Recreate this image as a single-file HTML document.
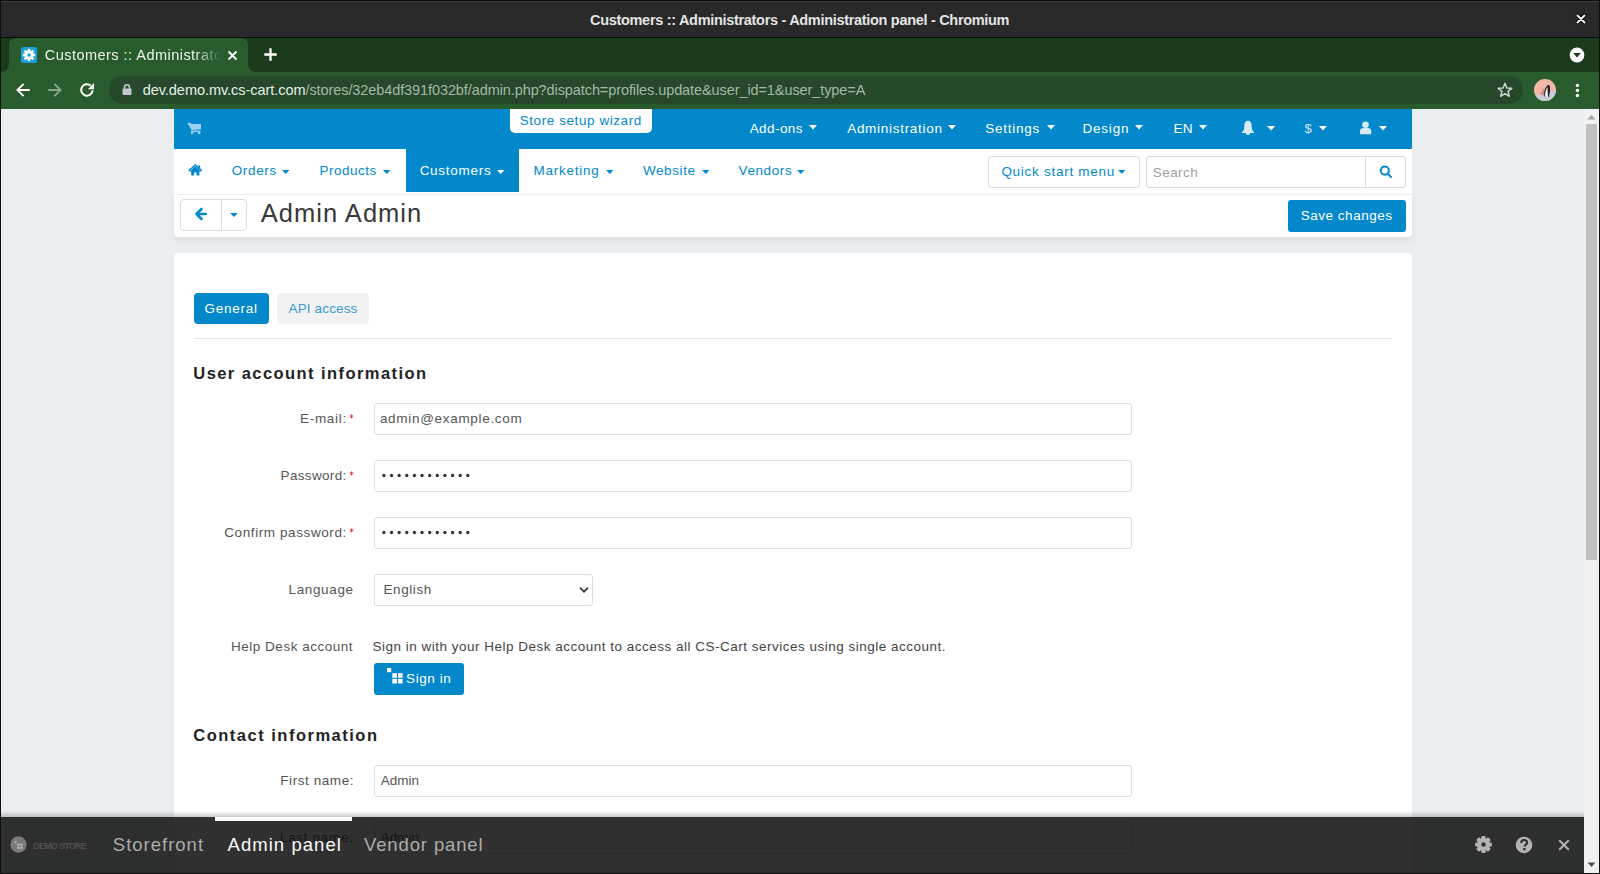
<!DOCTYPE html><html><head><meta charset="utf-8"><style>
html,body{margin:0;padding:0;width:1600px;height:874px;overflow:hidden;background:#ebeef1;}
.b{position:absolute;box-sizing:border-box;}
.t{position:absolute;white-space:nowrap;font-family:"Liberation Sans",sans-serif;}
svg.b{overflow:visible;}
</style></head><body>
<div class="b" style="left:0px;top:0px;width:1600px;height:38px;background:#292929;"></div>
<div class="b" style="left:0px;top:0px;width:1600px;height:1px;background:#0d0d0d;"></div>
<div class="b" style="left:1px;top:1px;width:1598px;height:1px;background:#3b3b3b;"></div>
<div class="b" style="left:0px;top:37px;width:1600px;height:1px;background:#0a0a0a;"></div>
<div class="t" style="left:590.00px;top:13px;font-size:14.5px;line-height:14.5px;color:#e4e4e4;font-weight:700;letter-spacing:-0.308px;">Customers :: Administrators - Administration panel - Chromium</div>
<svg class="b" style="left:1576px;top:14px;" width="10" height="10" viewBox="0 0 10 10"><path d="M1.5 1.5 L8.5 8.5 M8.5 1.5 L1.5 8.5" stroke="#000" stroke-width="3.6" stroke-linecap="round"/><path d="M1.5 1.5 L8.5 8.5 M8.5 1.5 L1.5 8.5" stroke="#f2f2f2" stroke-width="2" stroke-linecap="round"/></svg>
<div class="b" style="left:0px;top:38px;width:1600px;height:34px;background:#1b3a1b;"></div>
<svg class="b" style="left:0px;top:37px;" width="260" height="35" viewBox="0 0 260 35"><path d="M0 35 Q9 35 9 26 L9 8 Q9 1 17 1 L240 1 Q248 1 248 8 L248 26 Q248 35 257 35 Z" fill="#295c2c"/></svg>
<div class="b" style="left:1px;top:38px;width:9px;height:34px;background:transparent;"></div>
<svg class="b" style="left:21px;top:47px;" width="16" height="16" viewBox="0 0 16 16"><rect x="0" y="0" width="16" height="16" rx="2.5" fill="#1aa0e0"/><g transform="translate(8,8)" fill="#fff"><circle r="4.6"/><rect x="-1.3" y="-6.2" width="2.6" height="3" transform="rotate(0)"/><rect x="-1.3" y="-6.2" width="2.6" height="3" transform="rotate(45)"/><rect x="-1.3" y="-6.2" width="2.6" height="3" transform="rotate(90)"/><rect x="-1.3" y="-6.2" width="2.6" height="3" transform="rotate(135)"/><rect x="-1.3" y="-6.2" width="2.6" height="3" transform="rotate(180)"/><rect x="-1.3" y="-6.2" width="2.6" height="3" transform="rotate(225)"/><rect x="-1.3" y="-6.2" width="2.6" height="3" transform="rotate(270)"/><rect x="-1.3" y="-6.2" width="2.6" height="3" transform="rotate(315)"/><circle r="1.8" fill="#1aa0e0"/></g></svg>
<div class="t" style="left:44.75px;top:48px;font-size:14.5px;line-height:14.5px;color:#eef3ee;letter-spacing:0.469px;-webkit-mask-image:linear-gradient(90deg,#000 150px,transparent 176px);">Customers :: Administrato</div>
<svg class="b" style="left:227px;top:50px;" width="11" height="11" viewBox="0 0 11 11"><path d="M1.5 1.5 L9.5 9.5 M9.5 1.5 L1.5 9.5" stroke="#fff" stroke-width="1.8"/></svg>
<svg class="b" style="left:264px;top:48px;" width="13" height="13" viewBox="0 0 13 13"><path d="M6.5 0.3 V12.7 M0.3 6.5 H12.7" stroke="#fff" stroke-width="2.3"/></svg>
<svg class="b" style="left:1569px;top:47px;" width="16" height="16" viewBox="0 0 16 16"><circle cx="8" cy="8" r="7.4" fill="#fff"/><polygon points="4.2,6 11.8,6 8,10.6" fill="#1c3a1c"/></svg>
<div class="b" style="left:0px;top:72px;width:1600px;height:37px;background:#295c2c;"></div>
<div class="b" style="left:109px;top:76px;width:1414px;height:28px;background:#25482a;border-radius:14px;"></div>
<svg class="b" style="left:16px;top:83px;" width="14" height="14" viewBox="0 0 14 14"><path d="M13.8 7 H1.5 M7.6 0.9 L1.4 7 L7.6 13.1" stroke="#fff" stroke-width="1.9" fill="none"/></svg>
<svg class="b" style="left:48px;top:83px;" width="14" height="14" viewBox="0 0 14 14"><path d="M0.2 7 H12.5 M6.4 0.9 L12.6 7 L6.4 13.1" stroke="#8aa88b" stroke-width="1.9" fill="none"/></svg>
<svg class="b" style="left:80px;top:83px;" width="14" height="14" viewBox="0 0 14 14"><path d="M12.6 7.2 A5.7 5.7 0 1 1 10.6 2.6" stroke="#fff" stroke-width="2" fill="none"/><polygon points="14,0 14,6.2 7.8,6.2" fill="#fff"/></svg>
<svg class="b" style="left:122px;top:84px;" width="10" height="11" viewBox="0 0 10 11"><rect x="0.5" y="4.5" width="9" height="6.5" rx="1" fill="#c3c6cc"/><path d="M2.5 5 V3.3 A2.5 2.5 0 0 1 7.5 3.3 V5" stroke="#c3c6cc" stroke-width="1.6" fill="none"/></svg>
<div class="t" style="left:142.70px;top:83px;font-size:14.5px;line-height:14.5px;color:#e8ede8;letter-spacing:-0.045px;">dev.demo.mv.cs-cart.com</div>
<div class="t" style="left:305.50px;top:83px;font-size:14.5px;line-height:14.5px;color:#a4b8a4;letter-spacing:-0.091px;">/stores/32eb4df391f032bf/admin.php?dispatch=profiles.update&amp;user_id=1&amp;user_type=A</div>
<svg class="b" style="left:1497px;top:82px;" width="16" height="16" viewBox="0 0 16 16"><polygon points="8,1.3 9.9,6 14.8,6.3 11,9.4 12.3,14.3 8,11.6 3.7,14.3 5,9.4 1.2,6.3 6.1,6" stroke="#cfd3cf" stroke-width="1.5" fill="none" stroke-linejoin="round"/></svg>
<svg class="b" style="left:1534px;top:79px;" width="22" height="22" viewBox="0 0 22 22"><defs><clipPath id="av"><circle cx="11" cy="11" r="11"/></clipPath></defs><g clip-path="url(#av)"><rect width="22" height="22" fill="#f3b7a7"/><polygon points="0,17 22,11 22,22 0,22" fill="#c9ccd6"/><polygon points="6,15 10,9 11,17" fill="#c98f80"/><path d="M11 18 C9 14 11 8 14 6 C16 5 16 9 16 12 L15 18 Z" fill="#1f2123"/><path d="M11.5 18 C10.5 14 12 10 13.5 8 L14 18 Z" fill="#f4f4f4"/></g></svg>
<svg class="b" style="left:1575px;top:83px;" width="5" height="15" viewBox="0 0 5 15"><circle cx="2.4" cy="2.4" r="1.7" fill="#fff"/><circle cx="2.4" cy="7.4" r="1.7" fill="#fff"/><circle cx="2.4" cy="12.5" r="1.7" fill="#fff"/></svg>
<div class="b" style="left:1px;top:109px;width:1583px;height:764px;background:#ebeef1;"></div>
<div class="b" style="left:1584px;top:109px;width:15px;height:764px;background:#f1f1f1;"></div>
<svg class="b" style="left:1587px;top:114px;" width="9" height="6" viewBox="0 0 9 6"><polygon points="0.5,5.5 8.5,5.5 4.5,1" fill="#a3a3a3"/></svg>
<div class="b" style="left:1586px;top:124px;width:11px;height:436px;background:#c1c1c1;"></div>
<svg class="b" style="left:1587px;top:862px;" width="9" height="6" viewBox="0 0 9 6"><polygon points="0.5,0.5 8.5,0.5 4.5,5" fill="#505050"/></svg>
<div class="b" style="left:174px;top:109px;width:1238px;height:40px;background:#0388cc;"></div>
<svg class="b" style="left:187px;top:122px;" width="15" height="13" viewBox="0 0 15 13"><path d="M0.5 1.2 H3.6 L4.3 2.2 H14 V7.3 L4.8 8.4 V9.2 H13 V10.2" fill="none"/><path d="M0.3 0.8 H3.5 L4.2 2 H14 V7.2 L4.6 8.2 Z" fill="#9dcfee"/><rect x="4" y="8.6" width="9.3" height="1.5" fill="#9dcfee"/><rect x="4" y="9.5" width="2.2" height="2.6" fill="#9dcfee"/><rect x="11" y="9.5" width="2.2" height="2.6" fill="#9dcfee"/></svg>
<div class="b" style="left:510px;top:109px;width:142px;height:24px;background:#fff;border-radius:0 0 5px 5px;"></div>
<div class="t" style="left:519.65px;top:114px;font-size:13.5px;line-height:13.5px;color:#0388cc;letter-spacing:0.579px;">Store setup wizard</div>
<div class="t" style="left:749.70px;top:122px;font-size:13.5px;line-height:13.5px;color:#fff;letter-spacing:0.425px;">Add-ons</div>
<svg class="b" style="left:809px;top:125px;" width="8" height="4.5" viewBox="0 0 8 4.5"><polygon points="0,0 8,0 4.0,4.5" fill="#fff"/></svg>
<div class="t" style="left:847.20px;top:122px;font-size:13.5px;line-height:13.5px;color:#fff;letter-spacing:0.712px;">Administration</div>
<svg class="b" style="left:947.6px;top:125px;" width="8" height="4.5" viewBox="0 0 8 4.5"><polygon points="0,0 8,0 4.0,4.5" fill="#fff"/></svg>
<div class="t" style="left:985.25px;top:122px;font-size:13.5px;line-height:13.5px;color:#fff;letter-spacing:0.757px;">Settings</div>
<svg class="b" style="left:1046.7px;top:125px;" width="8" height="4.5" viewBox="0 0 8 4.5"><polygon points="0,0 8,0 4.0,4.5" fill="#fff"/></svg>
<div class="t" style="left:1082.40px;top:122px;font-size:13.5px;line-height:13.5px;color:#fff;letter-spacing:0.810px;">Design</div>
<svg class="b" style="left:1135px;top:125px;" width="8" height="4.5" viewBox="0 0 8 4.5"><polygon points="0,0 8,0 4.0,4.5" fill="#fff"/></svg>
<div class="t" style="left:1173.60px;top:122px;font-size:13.5px;line-height:13.5px;color:#fff;letter-spacing:0.050px;">EN</div>
<svg class="b" style="left:1198.7px;top:125px;" width="8" height="4.5" viewBox="0 0 8 4.5"><polygon points="0,0 8,0 4.0,4.5" fill="#fff"/></svg>
<svg class="b" style="left:1240px;top:120px;" width="16" height="16" viewBox="0 0 16 16"><path d="M8 0.8 C5.6 0.8 4.6 2.5 4.4 5 L4.1 8.5 C3.8 10.5 2.6 11.8 1.5 13 L14.5 13 C13.4 11.8 12.2 10.5 11.9 8.5 L11.6 5 C11.4 2.5 10.4 0.8 8 0.8 Z" fill="#d6eaf7"/><path d="M6 12.8 H10 V13.8 C10 14.6 9 14.9 8 14.9 C7 14.9 6 14.6 6 13.8 Z" fill="#d6eaf7"/></svg>
<svg class="b" style="left:1266.5px;top:125.6px;" width="8.2" height="4.4" viewBox="0 0 8.2 4.4"><polygon points="0,0 8.2,0 4.1,4.4" fill="#fff"/></svg>
<div class="t" style="left:1304.55px;top:122px;font-size:13px;line-height:13px;color:#d6eaf7;">$</div>
<svg class="b" style="left:1318.7px;top:125.6px;" width="8" height="4.4" viewBox="0 0 8 4.4"><polygon points="0,0 8,0 4.0,4.4" fill="#fff"/></svg>
<svg class="b" style="left:1359px;top:121px;" width="14" height="14" viewBox="0 0 14 14"><circle cx="6.5" cy="3.7" r="3.3" fill="#d6eaf7"/><path d="M1 12.4 V9.8 C1 7.9 2.6 6.9 4 6.9 H9 C10.4 6.9 12.2 7.9 12.2 9.8 V12.4 C12.2 12.9 11.8 13.2 11.3 13.2 H1.9 C1.4 13.2 1 12.9 1 12.4 Z" fill="#d6eaf7"/></svg>
<svg class="b" style="left:1379.4px;top:125.6px;" width="8" height="4.4" viewBox="0 0 8 4.4"><polygon points="0,0 8,0 4.0,4.4" fill="#fff"/></svg>
<div class="b" style="left:174px;top:149px;width:1238px;height:46px;background:#fff;"></div>
<div class="b" style="left:174px;top:194px;width:1238px;height:1px;background:#eef0f2;"></div>
<div class="b" style="left:405.7px;top:149px;width:113.5px;height:43.3px;background:#0388cc;"></div>
<svg class="b" style="left:188px;top:164px;" width="15" height="12" viewBox="0 0 15 12"><path d="M7.3 2.3 L1.5 7.5 H3.2 V11.5 H6.1 V8.5 H8.5 V11.5 H11.4 V7.5 H13.1 Z" fill="#0388cc"/><path d="M0.6 7 L7.3 1 L14 7" stroke="#0388cc" stroke-width="1.6" fill="none"/><rect x="10.3" y="1.4" width="1.9" height="3.5" fill="#0388cc"/></svg>
<div class="t" style="left:231.70px;top:164px;font-size:13.5px;line-height:13.5px;color:#0388cc;letter-spacing:0.650px;">Orders</div>
<svg class="b" style="left:282.3px;top:170px;" width="7.5" height="4" viewBox="0 0 7.5 4"><polygon points="0,0 7.5,0 3.75,4" fill="#0388cc"/></svg>
<div class="t" style="left:319.40px;top:164px;font-size:13.5px;line-height:13.5px;color:#0388cc;letter-spacing:0.507px;">Products</div>
<svg class="b" style="left:383.2px;top:170px;" width="7.5" height="4" viewBox="0 0 7.5 4"><polygon points="0,0 7.5,0 3.75,4" fill="#0388cc"/></svg>
<div class="t" style="left:419.65px;top:164px;font-size:13.5px;line-height:13.5px;color:#fff;letter-spacing:0.725px;">Customers</div>
<svg class="b" style="left:497.3px;top:170px;" width="7.5" height="4" viewBox="0 0 7.5 4"><polygon points="0,0 7.5,0 3.75,4" fill="#fff"/></svg>
<div class="t" style="left:533.60px;top:164px;font-size:13.5px;line-height:13.5px;color:#0388cc;letter-spacing:0.725px;">Marketing</div>
<svg class="b" style="left:606px;top:170px;" width="7.5" height="4" viewBox="0 0 7.5 4"><polygon points="0,0 7.5,0 3.75,4" fill="#0388cc"/></svg>
<div class="t" style="left:642.90px;top:164px;font-size:13.5px;line-height:13.5px;color:#0388cc;letter-spacing:0.600px;">Website</div>
<svg class="b" style="left:701.6px;top:170px;" width="7.5" height="4" viewBox="0 0 7.5 4"><polygon points="0,0 7.5,0 3.75,4" fill="#0388cc"/></svg>
<div class="t" style="left:738.60px;top:164px;font-size:13.5px;line-height:13.5px;color:#0388cc;letter-spacing:0.583px;">Vendors</div>
<svg class="b" style="left:797.3px;top:170px;" width="7.5" height="4" viewBox="0 0 7.5 4"><polygon points="0,0 7.5,0 3.75,4" fill="#0388cc"/></svg>
<div class="b" style="left:988px;top:156px;width:151.5px;height:32px;border:1px solid #d3dbe3;border-radius:3px;background:#fff;"></div>
<div class="t" style="left:1001.40px;top:165px;font-size:13.5px;line-height:13.5px;color:#0388cc;letter-spacing:0.723px;">Quick start menu</div>
<svg class="b" style="left:1118px;top:170px;" width="7.6" height="3.8" viewBox="0 0 7.6 3.8"><polygon points="0,0 7.6,0 3.8,3.8" fill="#0388cc"/></svg>
<div class="b" style="left:1146px;top:156px;width:260px;height:32px;border:1px solid #d3dbe3;border-radius:3px;background:#fff;"></div>
<div class="b" style="left:1365px;top:156px;width:1px;height:32px;background:#d3dbe3;"></div>
<div class="t" style="left:1152.85px;top:166px;font-size:13.5px;line-height:13.5px;color:#a0a0a0;letter-spacing:0.410px;">Search</div>
<svg class="b" style="left:1378px;top:165px;" width="15" height="14" viewBox="0 0 15 14"><circle cx="6.8" cy="5.6" r="4.1" stroke="#0388cc" stroke-width="2" fill="none"/><path d="M9.8 8.8 L13.1 12.1" stroke="#0388cc" stroke-width="2" stroke-linecap="round"/></svg>
<div class="b" style="left:174px;top:195px;width:1238px;height:42px;background:#fff;border-radius:0 0 4px 4px;box-shadow:0 3px 6px rgba(0,0,0,0.07);"></div>
<div class="b" style="left:180px;top:199px;width:67px;height:32px;border:1px solid #d6dee5;border-radius:4px;background:#fff;"></div>
<div class="b" style="left:221px;top:199px;width:1px;height:32px;background:#d6dee5;"></div>
<svg class="b" style="left:194px;top:207px;" width="13" height="14" viewBox="0 0 13 14"><path d="M11.8 7 H3 M7.5 2 L2.5 7 L7.5 12" stroke="#0388cc" stroke-width="2.6" fill="none" stroke-linecap="round" stroke-linejoin="round"/></svg>
<svg class="b" style="left:230px;top:212.7px;" width="7.8" height="3.9" viewBox="0 0 7.8 3.9"><polygon points="0,0 7.8,0 3.9,3.9" fill="#0388cc"/></svg>
<div class="t" style="left:260.80px;top:201px;font-size:25.5px;line-height:25.5px;color:#383838;letter-spacing:1.020px;">Admin Admin</div>
<div class="b" style="left:1288px;top:200px;width:118px;height:31.5px;background:#0388cc;border-radius:3px;"></div>
<div class="t" style="left:1300.65px;top:209px;font-size:13.5px;line-height:13.5px;color:#fff;letter-spacing:0.532px;">Save changes</div>
<div class="b" style="left:174px;top:253px;width:1238px;height:640px;background:#fff;border-radius:4px;box-shadow:0 1px 2px rgba(0,0,0,0.04);"></div>
<div class="b" style="left:194px;top:293px;width:74.5px;height:31px;background:#0388cc;border-radius:4px;"></div>
<div class="t" style="left:204.45px;top:302px;font-size:13.5px;line-height:13.5px;color:#fff;letter-spacing:0.758px;">General</div>
<div class="b" style="left:277px;top:293px;width:91.5px;height:31px;background:#f2f2f2;border-radius:4px;"></div>
<div class="t" style="left:288.50px;top:302px;font-size:13.5px;line-height:13.5px;color:#3a9ad6;letter-spacing:0.144px;">API access</div>
<div class="b" style="left:194px;top:338px;width:1198px;height:1px;background:#e1e7ec;"></div>
<div class="t" style="left:193.30px;top:365px;font-size:16.5px;line-height:16.5px;color:#222;font-weight:700;letter-spacing:1.433px;">User account information</div>
<div class="t" style="left:300.00px;top:412px;font-size:13.5px;line-height:13.5px;color:#555;letter-spacing:0.708px;">E-mail:</div>
<svg class="b" style="left:349px;top:413.5px;" width="5" height="5" viewBox="0 0 5 5"><path d="M2.5 0.4 V4.4 M0.8 1.4 L4.2 3.4 M4.2 1.4 L0.8 3.4" stroke="#ee3338" stroke-width="0.9"/></svg>
<div class="b" style="left:374px;top:403px;width:758px;height:32px;border:1px solid #d8dee4;border-radius:3px;background:#fff;"></div>
<div class="t" style="left:379.90px;top:412px;font-size:13.5px;line-height:13.5px;color:#555;letter-spacing:0.694px;">admin@example.com</div>
<div class="t" style="left:280.60px;top:469px;font-size:13.5px;line-height:13.5px;color:#555;letter-spacing:0.331px;">Password:</div>
<svg class="b" style="left:349px;top:470.5px;" width="5" height="5" viewBox="0 0 5 5"><path d="M2.5 0.4 V4.4 M0.8 1.4 L4.2 3.4 M4.2 1.4 L0.8 3.4" stroke="#ee3338" stroke-width="0.9"/></svg>
<div class="b" style="left:374px;top:460px;width:758px;height:32px;border:1px solid #d8dee4;border-radius:3px;background:#fff;"></div>
<svg class="b" style="left:380px;top:473px;" width="92" height="5" viewBox="0 0 92 5"><circle cx="3.90" cy="2.5" r="1.65" fill="#333"/><circle cx="11.53" cy="2.5" r="1.65" fill="#333"/><circle cx="19.16" cy="2.5" r="1.65" fill="#333"/><circle cx="26.79" cy="2.5" r="1.65" fill="#333"/><circle cx="34.42" cy="2.5" r="1.65" fill="#333"/><circle cx="42.05" cy="2.5" r="1.65" fill="#333"/><circle cx="49.68" cy="2.5" r="1.65" fill="#333"/><circle cx="57.31" cy="2.5" r="1.65" fill="#333"/><circle cx="64.94" cy="2.5" r="1.65" fill="#333"/><circle cx="72.57" cy="2.5" r="1.65" fill="#333"/><circle cx="80.20" cy="2.5" r="1.65" fill="#333"/><circle cx="87.83" cy="2.5" r="1.65" fill="#333"/></svg>
<div class="t" style="left:224.25px;top:526px;font-size:13.5px;line-height:13.5px;color:#555;letter-spacing:0.594px;">Confirm password:</div>
<svg class="b" style="left:349px;top:527.5px;" width="5" height="5" viewBox="0 0 5 5"><path d="M2.5 0.4 V4.4 M0.8 1.4 L4.2 3.4 M4.2 1.4 L0.8 3.4" stroke="#ee3338" stroke-width="0.9"/></svg>
<div class="b" style="left:374px;top:517px;width:758px;height:32px;border:1px solid #d8dee4;border-radius:3px;background:#fff;"></div>
<svg class="b" style="left:380px;top:530px;" width="92" height="5" viewBox="0 0 92 5"><circle cx="3.90" cy="2.5" r="1.65" fill="#333"/><circle cx="11.53" cy="2.5" r="1.65" fill="#333"/><circle cx="19.16" cy="2.5" r="1.65" fill="#333"/><circle cx="26.79" cy="2.5" r="1.65" fill="#333"/><circle cx="34.42" cy="2.5" r="1.65" fill="#333"/><circle cx="42.05" cy="2.5" r="1.65" fill="#333"/><circle cx="49.68" cy="2.5" r="1.65" fill="#333"/><circle cx="57.31" cy="2.5" r="1.65" fill="#333"/><circle cx="64.94" cy="2.5" r="1.65" fill="#333"/><circle cx="72.57" cy="2.5" r="1.65" fill="#333"/><circle cx="80.20" cy="2.5" r="1.65" fill="#333"/><circle cx="87.83" cy="2.5" r="1.65" fill="#333"/></svg>
<div class="t" style="left:288.50px;top:583px;font-size:13.5px;line-height:13.5px;color:#555;letter-spacing:0.643px;">Language</div>
<div class="b" style="left:374px;top:574px;width:219px;height:32px;border:1px solid #d8dee4;border-radius:3px;background:#fff;"></div>
<div class="t" style="left:383.50px;top:583px;font-size:13.5px;line-height:13.5px;color:#555;letter-spacing:0.583px;">English</div>
<svg class="b" style="left:579px;top:586px;" width="10" height="8" viewBox="0 0 10 8"><path d="M1 1.6 L5 5.7 L9 1.6" stroke="#3c3c3c" stroke-width="1.7" fill="none"/></svg>
<div class="t" style="left:231.00px;top:640px;font-size:13.5px;line-height:13.5px;color:#555;letter-spacing:0.516px;">Help Desk account</div>
<div class="t" style="left:372.55px;top:640px;font-size:13.5px;line-height:13.5px;color:#444;letter-spacing:0.497px;">Sign in with your Help Desk account to access all CS-Cart services using single account.</div>
<div class="b" style="left:374px;top:663px;width:90px;height:32px;background:#0388cc;border-radius:3px;"></div>
<svg class="b" style="left:387px;top:668px;" width="17" height="16" viewBox="0 0 17 16"><rect x="0" y="0" width="4.2" height="4.2" fill="#fff"/><rect x="5.3" y="5.2" width="4.6" height="4.6" fill="#fff"/><rect x="11" y="5.2" width="4.6" height="4.6" fill="#fff"/><rect x="5.3" y="10.9" width="4.6" height="4.6" fill="#fff"/><rect x="11" y="10.9" width="4.6" height="4.6" fill="#fff"/></svg>
<div class="t" style="left:406.05px;top:672px;font-size:13.5px;line-height:13.5px;color:#fff;letter-spacing:0.575px;">Sign in</div>
<div class="t" style="left:193.25px;top:727px;font-size:16.5px;line-height:16.5px;color:#222;font-weight:700;letter-spacing:1.500px;">Contact information</div>
<div class="t" style="left:280.30px;top:774px;font-size:13.5px;line-height:13.5px;color:#555;letter-spacing:0.565px;">First name:</div>
<div class="b" style="left:374px;top:765px;width:758px;height:32px;border:1px solid #d8dee4;border-radius:3px;background:#fff;"></div>
<div class="t" style="left:380.70px;top:774px;font-size:13.5px;line-height:13.5px;color:#555;">Admin</div>
<div class="t" style="left:280.00px;top:831px;font-size:13.5px;line-height:13.5px;color:#555;letter-spacing:0.678px;">Last name:</div>
<div class="b" style="left:374px;top:822px;width:758px;height:32px;border:1px solid #d8dee4;border-radius:3px;background:#fff;"></div>
<div class="t" style="left:380.70px;top:831px;font-size:13.5px;line-height:13.5px;color:#555;">Admin</div>
<div class="b" style="left:1px;top:811px;width:1583px;height:6px;background:linear-gradient(to bottom,rgba(0,0,0,0),rgba(0,0,0,0.2));"></div>
<div class="b" style="left:1px;top:817px;width:1583px;height:56px;background:rgba(8,8,8,0.84);"></div>
<div class="b" style="left:215px;top:817px;width:137px;height:4px;background:#fff;"></div>
<svg class="b" style="left:10px;top:836px;" width="17" height="17" viewBox="0 0 17 17"><circle cx="8.5" cy="8.5" r="8.2" fill="#7a7a7a"/><rect x="4.6" y="5" width="1.9" height="1.9" fill="#b9b9b9"/><rect x="7.3" y="7.6" width="2.2" height="2.2" fill="#b9b9b9"/><rect x="10.3" y="7.6" width="2.2" height="2.2" fill="#b9b9b9"/><rect x="7.3" y="10.6" width="2.2" height="2.2" fill="#b9b9b9"/><rect x="10.3" y="10.6" width="2.2" height="2.2" fill="#b9b9b9"/></svg>
<div class="t" style="left:33.30px;top:842px;font-size:9px;line-height:9px;color:#4e4e4e;font-weight:700;letter-spacing:-0.778px;">DEMO STORE</div>
<div class="t" style="left:112.85px;top:836px;font-size:18.5px;line-height:18.5px;color:#acacac;letter-spacing:0.994px;">Storefront</div>
<div class="t" style="left:227.50px;top:836px;font-size:18.5px;line-height:18.5px;color:#fafafa;letter-spacing:1.055px;">Admin panel</div>
<div class="t" style="left:364.00px;top:836px;font-size:18.5px;line-height:18.5px;color:#acacac;letter-spacing:0.873px;">Vendor panel</div>
<svg class="b" style="left:1475px;top:836px;" width="18" height="18" viewBox="0 0 18 18"><g transform="translate(8.5,8.5)" fill="#b3b3b3"><circle r="6.4"/><rect x="-2.1" y="-8.4" width="4.2" height="4" rx="1" transform="rotate(0)"/><rect x="-2.1" y="-8.4" width="4.2" height="4" rx="1" transform="rotate(45)"/><rect x="-2.1" y="-8.4" width="4.2" height="4" rx="1" transform="rotate(90)"/><rect x="-2.1" y="-8.4" width="4.2" height="4" rx="1" transform="rotate(135)"/><rect x="-2.1" y="-8.4" width="4.2" height="4" rx="1" transform="rotate(180)"/><rect x="-2.1" y="-8.4" width="4.2" height="4" rx="1" transform="rotate(225)"/><rect x="-2.1" y="-8.4" width="4.2" height="4" rx="1" transform="rotate(270)"/><rect x="-2.1" y="-8.4" width="4.2" height="4" rx="1" transform="rotate(315)"/><circle r="2.2" fill="#303030"/></g></svg>
<svg class="b" style="left:1515px;top:836px;" width="18" height="18" viewBox="0 0 18 18"><circle cx="9" cy="9" r="8.3" fill="#b3b3b3"/><path d="M6.2 6.9 C6.2 4.9 7.6 4 9.1 4 C10.9 4 12.1 5.1 12.1 6.6 C12.1 8.6 9.8 8.7 9.8 10.6" stroke="#303030" stroke-width="2.2" fill="none"/><rect x="8.2" y="12" width="2.4" height="2.3" fill="#303030"/></svg>
<svg class="b" style="left:1558px;top:839px;" width="12" height="12" viewBox="0 0 12 12"><path d="M1.2 1.2 L10.8 10.8 M10.8 1.2 L1.2 10.8" stroke="#b3b3b3" stroke-width="2"/></svg>
<div class="b" style="left:0px;top:0px;width:1px;height:874px;background:#0e0e0e;"></div>
<div class="b" style="left:1599px;top:0px;width:1px;height:874px;background:#0e0e0e;"></div>
<div class="b" style="left:0px;top:873px;width:1600px;height:1px;background:#0e0e0e;"></div>
</body></html>
